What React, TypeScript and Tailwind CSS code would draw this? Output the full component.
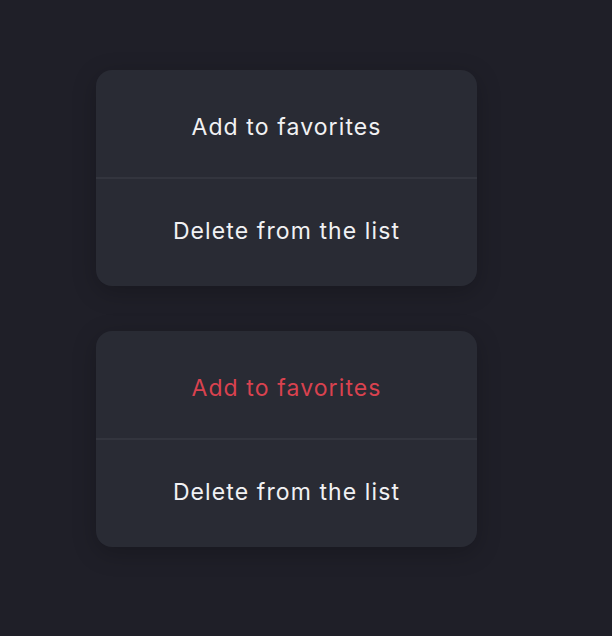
const menus = [
  { id: 1, highlight: false },
  { id: 2, highlight: true },
];

const Menu = ({ highlight }: { highlight: boolean }) => (
  <div className="w-[381px] rounded-[16px] bg-[#292b34] shadow-[0_6px_24px_rgba(0,0,0,0.22)] overflow-hidden">
    <div
      className={
        "h-[109px] flex items-center justify-center pt-[8px] text-[23px] tracking-[1.1px] border-b-2 border-[#33353e] " +
        (highlight ? "text-[#d9424f]" : "text-[#f1f1f3]")
      }
    >
      Add to favorites
    </div>
    <div className="h-[107px] flex items-center justify-center pb-[2px] text-[23px] tracking-[1.1px] text-[#f1f1f3]">
      Delete from the list
    </div>
  </div>
);

export default function App() {
  return (
    <div
      className="w-[612px] h-[636px] bg-[#1f1f28] flex flex-col gap-[45px] pt-[70px] pl-[96px]"
      style={{ fontFamily: "Inter, 'Liberation Sans', sans-serif" }}
    >
      {menus.map((m) => (
        <Menu key={m.id} highlight={m.highlight} />
      ))}
    </div>
  );
}
